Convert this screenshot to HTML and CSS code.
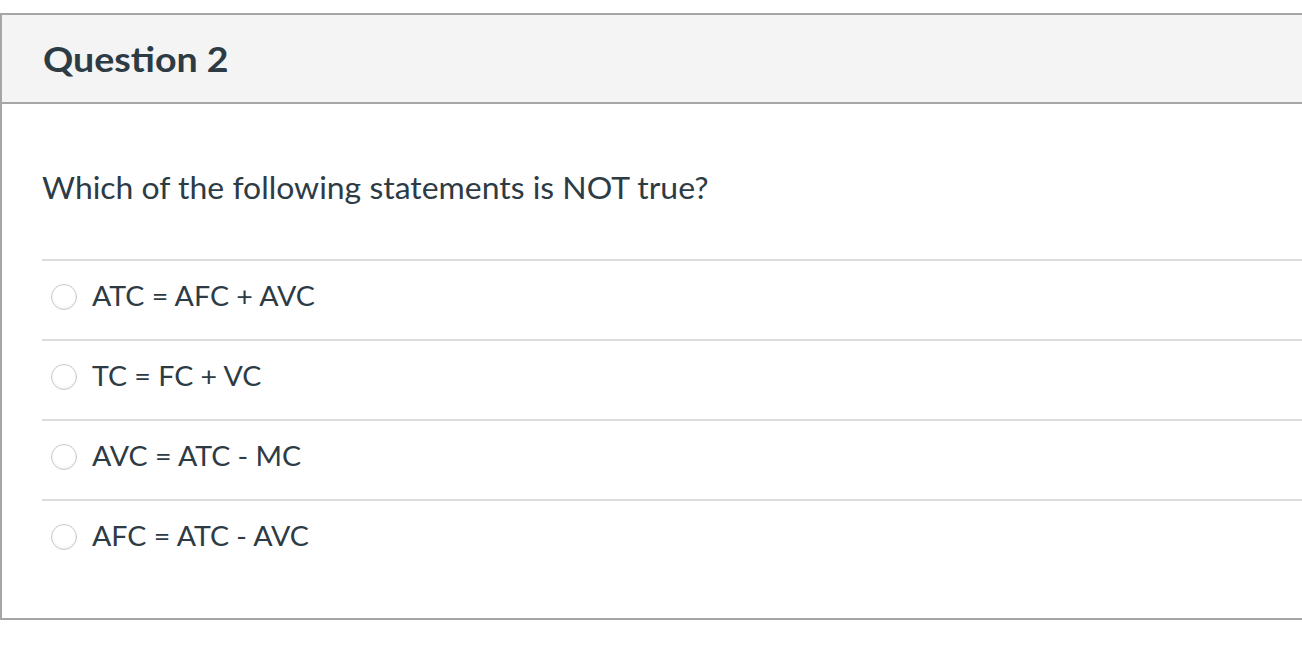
FILE: index.html
```html
<!DOCTYPE html>
<html>
<head>
<meta charset="utf-8">
<link rel="stylesheet" href="styles.css">
</head>
<body>
<div class="question">
  <div class="header"><h2 class="title"><span class="stretch">Question 2</span></h2></div>
  <div class="body">
    <p class="prompt"><span class="stretch">Which of the following statements is NOT true?</span></p>
    <div class="answers">
      <div class="answer"><span class="radio"></span><span class="label stretch">ATC = AFC + AVC</span></div>
      <div class="answer"><span class="radio"></span><span class="label stretch">TC = FC + VC</span></div>
      <div class="answer"><span class="radio"></span><span class="label stretch">AVC = ATC - MC</span></div>
      <div class="answer"><span class="radio"></span><span class="label stretch">AFC = ATC - AVC</span></div>
    </div>
  </div>
</div>
</body>
</html>
```
FILE: styles.css
```css
html, body {
  margin: 0;
  padding: 0;
  background: #fff;
}
body {
  font-family: Lato, "Open Sans", sans-serif;
  color: #2d3b45;
  overflow: hidden;
}
.stretch {
  display: inline-block;
  transform: scaleX(1.072);
  transform-origin: left center;
  white-space: nowrap;
}
.question {
  margin-top: 13px;
  width: 1320px;
  border: 2px solid #a6a6a6;
  border-right: none;
}
.header {
  height: 87px;
  background: #f4f4f4;
  border-bottom: 2px solid #a6a6a6;
  display: flex;
  align-items: center;
  padding-left: 41px;
}
.title {
  margin: 0;
  font-size: 35px;
  font-weight: 700;
  line-height: 1;
}
.body {
  padding: 0 0 0 40px;
}
.prompt {
  margin: 0 0 54px;
  padding-top: 65px;
  height: 36px;
  font-size: 30px;
  line-height: 36px;
}
.prompt .stretch {
  transform: scaleX(1.064);
}
.answers {
  display: flex;
  flex-direction: column;
  padding-bottom: 39px;
}
.answer {
  height: 70px;
  border-top: 2px solid #dddddd;
  display: flex;
  align-items: center;
  padding-left: 9px;
  padding-bottom: 8px;
}
.radio {
  width: 24px;
  height: 24px;
  margin-top: 2px;
  border-radius: 50%;
  border: 1px solid #c8c8c8;
  background: radial-gradient(circle at 55% 40%, #ffffff 55%, #f0f0f0 100%);
  box-shadow: inset -1px -1px 1px rgba(0,0,0,0.04);
  flex: none;
}
.label {
  margin-left: 15px;
  font-size: 27px;
  line-height: 30px;
}
.label.stretch {
  transform: scaleX(1.058);
}
```
